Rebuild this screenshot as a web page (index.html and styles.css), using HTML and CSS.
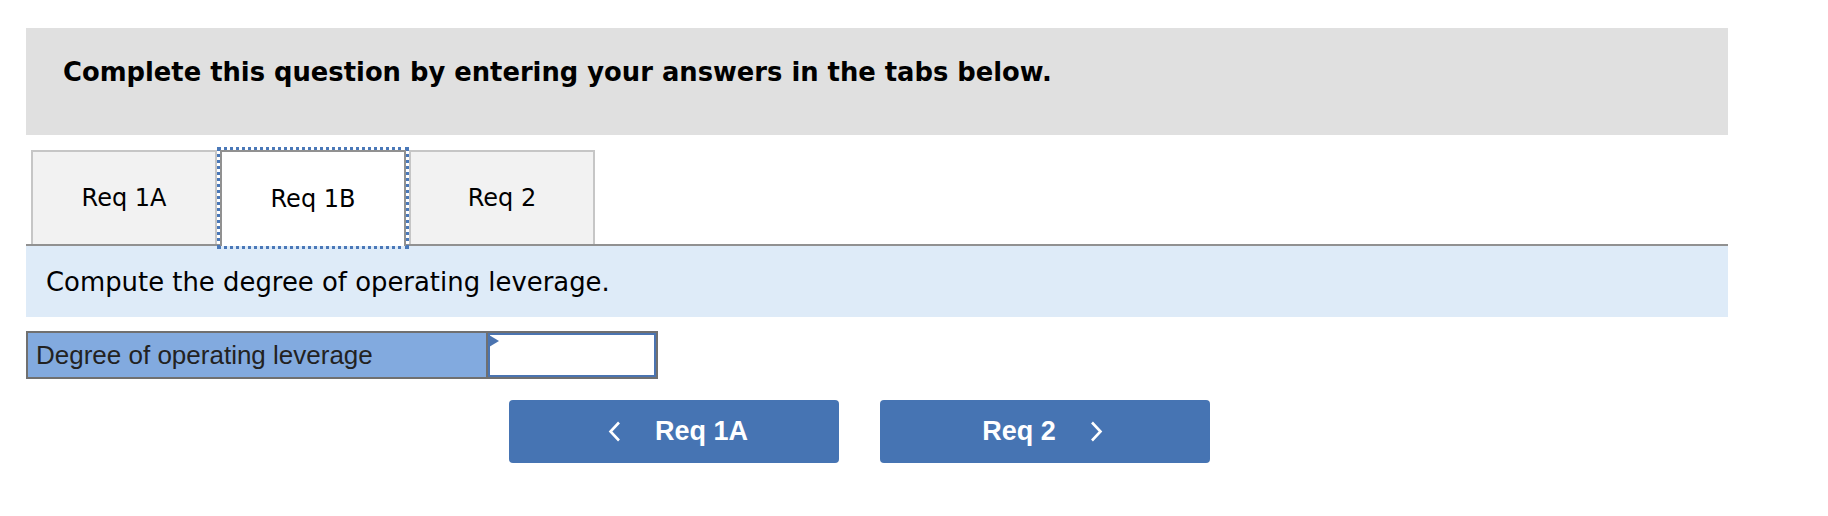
FILE: index.html
```html
<!DOCTYPE html>
<html lang="en">
<head>
  <meta charset="UTF-8">
  <title>Req 1B</title>
  <link rel="stylesheet" href="styles.css">
</head>
<body>

  <div class="container">
    <div class="instructions">
      <h2>Complete this question by entering your answers in the tabs below.</h2>
    </div>

    <div class="tab-bar">
      <button class="tab">Req 1A</button>
      <button class="tab active">Req 1B</button>
      <button class="tab">Req 2</button>
    </div>

    <div class="prompt">Compute the degree of operating leverage.</div>

    <div class="answer-row">
      <label class="answer-label" for="dol">Degree of operating leverage</label>
      <div class="answer-cell">
        <span class="flag"></span>
        <input type="text" id="dol">
      </div>
    </div>

    <div class="nav-bar">
      <button class="nav-btn prev">
        <svg width="13" height="21" viewBox="0 0 13 21"><polyline points="11,1.5 2.5,10.5 11,19.5" fill="none" stroke="#fff" stroke-width="2.6"/></svg>
        <span>Req 1A</span>
      </button>
      <button class="nav-btn next">
        <span>Req 2</span>
        <svg width="13" height="21" viewBox="0 0 13 21"><polyline points="2,1.5 10.5,10.5 2,19.5" fill="none" stroke="#fff" stroke-width="2.6"/></svg>
      </button>
    </div>
  </div>

</body>
</html>
```

FILE: styles.css
```css
body {
  margin: 0;
  background-color: #fff;
  font-family: "DejaVu Sans", Verdana, sans-serif;
  color: #000;
}
.container {
  width: 1702px;
  margin: 28px 0 0 26px;
}
.instructions {
  background-color: #e0e0e0;
  height: 107px;
  box-sizing: border-box;
  padding: 30px 37px 0;
}
.instructions h2 {
  margin: 0;
  font-size: 25.8px;
  font-weight: bold;
  line-height: 29px;
}
.tab-bar {
  margin-top: 15px;
  padding-left: 5px;
  display: flex;
  gap: 3px;
  border-bottom: 2px solid #919191;
  height: 94px;
}
.tab {
  width: 186px;
  height: 94px;
  background-color: #f2f2f2;
  border: 2px solid #c6c6c6;
  border-bottom: none;
  font-family: "DejaVu Sans", Verdana, sans-serif;
  font-size: 24px;
  color: #000;
  padding: 0;
  cursor: pointer;
}
.tab.active {
  background-color: #fff;
  border-color: #919191;
  height: 96px;
  outline: 3px dotted #4a78b8;
  outline-offset: 0;
}
.prompt {
  background-color: #deebf8;
  height: 71px;
  display: flex;
  align-items: center;
  padding-left: 20px;
  font-size: 25.9px;
}
.answer-row {
  margin-top: 14px;
  width: 632px;
  height: 48px;
  box-sizing: border-box;
  border: 2px solid #707070;
  display: flex;
}
.answer-label {
  flex: 1;
  background-color: #82aadf;
  border-right: 2px solid #707070;
  display: flex;
  align-items: center;
  padding-left: 8px;
  font-family: "Liberation Sans", Arial, sans-serif;
  font-size: 26px;
  color: #222;
}
.answer-cell {
  position: relative;
  width: 168px;
}
.answer-cell input {
  width: 100%;
  height: 100%;
  box-sizing: border-box;
  border: 2px solid #4b74b0;
  margin: 0;
  padding: 4px 8px;
  font-size: 22px;
  outline: none;
}
.flag {
  position: absolute;
  top: 2px;
  left: 1px;
  width: 0;
  height: 0;
  border-top: 6px solid transparent;
  border-bottom: 6px solid transparent;
  border-left: 10px solid #4b74b0;
}
.nav-bar {
  margin-top: 21px;
  margin-left: 483px;
  display: flex;
  gap: 41px;
}
.nav-btn {
  width: 330px;
  height: 63px;
  padding: 0;
  background-color: #4674b3;
  border: none;
  border-radius: 4px;
  color: #fff;
  font-family: "Liberation Sans", Arial, sans-serif;
  font-size: 27px;
  font-weight: bold;
  display: flex;
  align-items: center;
  justify-content: center;
  gap: 34px;
  cursor: pointer;
}
.nav-btn.prev {
  padding-left: 8px;
}
.nav-btn.next {
  padding-right: 5px;
}
```
